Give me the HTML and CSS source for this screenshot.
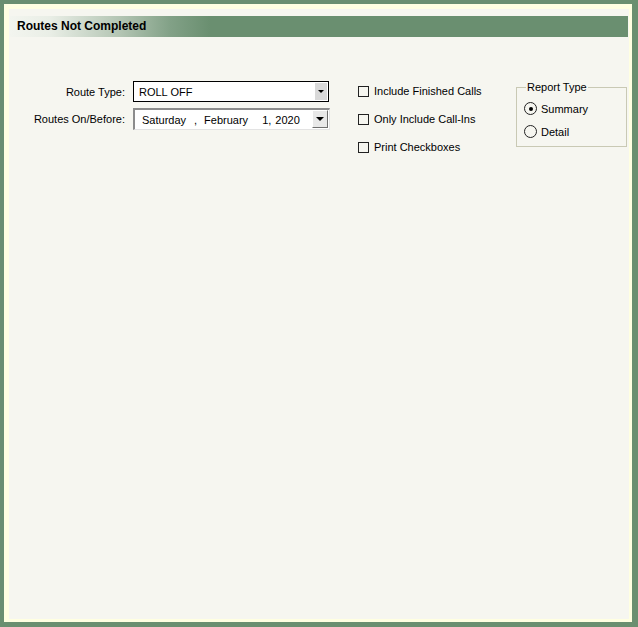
FILE: index.html
```html
<!DOCTYPE html>
<html lang="en">
<head>
    <meta charset="UTF-8">
    <title>Routes Not Completed</title>
    <link rel="stylesheet" href="styles.css">
</head>
<body>
    <div class="frame">
        <div class="inner">
            <div class="panel">
                <div class="title-bar">Routes Not Completed</div>
                <div class="form">
                    <div class="fields">
                        <label class="field-label">Route Type:</label>
                        <div class="combo">
                            <span class="combo-text">ROLL OFF</span>
                            <span class="combo-button"><span class="arrow small"></span></span>
                        </div>
                        <label class="field-label">Routes On/Before:</label>
                        <div class="date-picker">
                            <span class="date-text">
                                <span class="d-day">Saturday</span><span class="d-comma">,</span><span class="d-month">February</span><span class="d-num">1,</span><span class="d-year">2020</span>
                            </span>
                            <span class="date-button"><span class="arrow"></span></span>
                        </div>
                    </div>
                    <div class="checks">
                        <label class="check"><span class="box"></span>Include Finished Calls</label>
                        <label class="check"><span class="box"></span>Only Include Call-Ins</label>
                        <label class="check"><span class="box"></span>Print Checkboxes</label>
                    </div>
                    <fieldset class="group">
                        <legend>Report Type</legend>
                        <label class="radio"><span class="circle checked"></span>Summary</label>
                        <label class="radio"><span class="circle"></span>Detail</label>
                    </fieldset>
                </div>
            </div>
        </div>
    </div>
</body>
</html>
```

FILE: styles.css
```css
html, body {
    margin: 0;
    height: 100%;
}
body {
    background-color: #6a8f70;
    font-family: "Liberation Sans", Arial, sans-serif;
    font-size: 11px;
    color: #000;
}
.frame {
    height: 100%;
    box-sizing: border-box;
    padding: 4px 6px 5px 4px;
    display: flex;
}
.inner {
    flex: 1;
    display: flex;
    border-style: solid;
    border-color: #ffffe1;
    border-width: 5px 3px 3px 5px;
}
.panel {
    flex: 1;
    background-color: #f6f6f0;
    padding: 7px 1px 0 1px;
}
.title-bar {
    height: 21px;
    line-height: 21px;
    padding-left: 7px;
    font-size: 12px;
    font-weight: bold;
    background: linear-gradient(to right, #f3f5ef 0, #e9eee6 40px, #b3c5b3 110px, #82a187 160px, #6a8f70 200px);
}
.form {
    display: flex;
    align-items: flex-start;
    margin-top: 40px;
}
.fields {
    display: grid;
    grid-template-columns: 115px 197px;
    grid-template-rows: 21px 22px;
    column-gap: 8px;
    row-gap: 6px;
    margin-top: 4px;
}
.field-label {
    text-align: right;
    align-self: center;
}
.combo {
    display: flex;
    align-items: stretch;
    background-color: #fff;
    border: 1px solid #000;
    box-sizing: border-box;
    width: 196px;
}
.combo-text {
    flex: 1;
    padding-left: 5px;
    align-self: center;
}
.combo-button {
    width: 12px;
    margin: 1px;
    background-color: #d9d9d9;
    display: flex;
    align-items: center;
    justify-content: center;
}
.arrow {
    width: 0;
    height: 0;
    border-left: 4px solid transparent;
    border-right: 4px solid transparent;
    border-top: 4px solid #000;
}
.arrow.small {
    border-left-width: 3px;
    border-right-width: 3px;
    border-top-width: 3px;
}
.date-picker {
    display: flex;
    align-items: stretch;
    background-color: #fff;
    box-sizing: border-box;
    border-style: solid;
    border-width: 2px 1px 1px 2px;
    border-color: #8c8c8c #e3e3e3 #e3e3e3 #8c8c8c;
}
.date-text {
    flex: 1;
    align-self: center;
    padding-left: 7px;
    white-space: nowrap;
}
.d-comma {
    margin-left: 8px;
}
.d-month {
    margin-left: 7px;
}
.d-num {
    margin-left: 14px;
}
.d-year {
    margin-left: 4px;
}
.date-button {
    width: 14px;
    margin: 0 1px 1px 0;
    background-color: #e8e8e8;
    border-style: solid;
    border-width: 1px;
    border-color: #fff #6f6f6f #6f6f6f #fff;
    display: flex;
    align-items: center;
    justify-content: center;
}
.checks {
    display: flex;
    flex-direction: column;
    margin-left: 28px;
    width: 158px;
}
.check {
    display: flex;
    align-items: center;
    height: 28px;
}
.box {
    width: 9px;
    height: 9px;
    border: 1px solid #222;
    margin-right: 5px;
}
.group {
    margin: 4px 0 0 0;
    width: 111px;
    height: 66px;
    box-sizing: border-box;
    border: 1px solid #c9c9b4;
    padding: 3px 0 0 7px;
}
.group legend {
    padding: 0 1px;
    margin-left: 2px;
    line-height: 13px;
}
.radio {
    display: flex;
    align-items: center;
    height: 23px;
}
.circle {
    width: 11px;
    height: 11px;
    border: 1px solid #222;
    border-radius: 50%;
    margin-right: 4px;
    display: flex;
    align-items: center;
    justify-content: center;
}
.circle.checked::after {
    content: "";
    width: 4px;
    height: 4px;
    border-radius: 50%;
    background-color: #000;
}
```
